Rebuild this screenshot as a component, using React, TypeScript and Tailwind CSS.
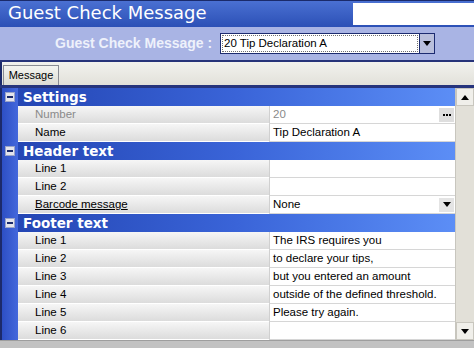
import React from 'react';

type Row =
  | { kind: 'section'; title: string }
  | { kind: 'prop'; label: string; value?: string; muted?: boolean; underline?: boolean; button?: 'dots' | 'drop' };

const rows: Row[] = [
  { kind: 'section', title: 'Settings' },
  { kind: 'prop', label: 'Number', value: '20', muted: true, button: 'dots' },
  { kind: 'prop', label: 'Name', value: 'Tip Declaration A' },
  { kind: 'section', title: 'Header text' },
  { kind: 'prop', label: 'Line 1' },
  { kind: 'prop', label: 'Line 2' },
  { kind: 'prop', label: 'Barcode message', value: 'None', underline: true, button: 'drop' },
  { kind: 'section', title: 'Footer text' },
  { kind: 'prop', label: 'Line 1', value: 'The IRS requires you' },
  { kind: 'prop', label: 'Line 2', value: 'to declare your tips,' },
  { kind: 'prop', label: 'Line 3', value: 'but you entered an amount' },
  { kind: 'prop', label: 'Line 4', value: 'outside of the defined threshold.' },
  { kind: 'prop', label: 'Line 5', value: 'Please try again.' },
  { kind: 'prop', label: 'Line 6' },
];

function DownArrow() {
  return (
    <svg width="8" height="5" viewBox="0 0 8 5">
      <path d="M0 0 H8 L4 5 Z" fill="#000" />
    </svg>
  );
}

function UpArrow() {
  return (
    <svg width="8" height="5" viewBox="0 0 8 5">
      <path d="M0 5 H8 L4 0 Z" fill="#000" />
    </svg>
  );
}

function Gutter({ minus }: { minus?: boolean }) {
  return (
    <div className="w-[16px] h-full shrink-0 bg-gradient-to-r from-[#2d4fc4] to-[#4468dc] flex items-center justify-center">
      {minus && (
        <div className="w-[10px] h-[10px] bg-[#e4e4ec] border border-[#9aa4c8] flex items-center justify-center">
          <div className="w-[6px] h-[2px] bg-[#1a2a6a]" />
        </div>
      )}
    </div>
  );
}

function GridRow({ row }: { row: Row }) {
  if (row.kind === 'section') {
    return (
      <div className="flex h-[18px]">
        <Gutter minus />
        <div className="flex-1 flex items-center pl-[5px] bg-gradient-to-r from-[#2446b4] via-[#3a64d8] to-[#5c8ef6] text-white font-bold text-[13.5px] font-['DejaVu_Sans',sans-serif]">
          {row.title}
        </div>
      </div>
    );
  }
  return (
    <div className="flex h-[18px]">
      <Gutter />
      <div className="w-[251px] shrink-0 flex items-center pl-[17px] bg-gradient-to-b from-[#f6f6f6] to-[#dcdcdc] border-b border-white">
        <span className={`${row.muted ? 'text-[#8a8a8a]' : 'text-black'} ${row.underline ? 'underline' : ''}`}>
          {row.label}
        </span>
      </div>
      <div className="flex-1 flex items-center pl-[3px] bg-white border-b border-[#d6d6d6] border-l border-l-[#d0d0d0]">
        <span className={row.muted ? 'text-[#8a8a8a]' : 'text-black'}>{row.value}</span>
        {row.button === 'dots' && (
          <div className="ml-auto mr-[1px] w-[15px] h-[14px] bg-[#dedede] flex items-center justify-center gap-[1px]">
            <div className="w-[2px] h-[2px] bg-black" />
            <div className="w-[2px] h-[2px] bg-black" />
            <div className="w-[2px] h-[2px] bg-black" />
          </div>
        )}
        {row.button === 'drop' && (
          <div className="ml-auto mr-[1px] w-[15px] h-[14px] bg-[#e4e4e4] flex items-center justify-center">
            <DownArrow />
          </div>
        )}
      </div>
    </div>
  );
}

export default function App() {
  return (
    <div className="w-[474px] h-[348px] overflow-hidden flex flex-col font-['Liberation_Sans',Arial,sans-serif] text-[11.5px] bg-[#c4c4c4]">
      {/* title bar */}
      <div className="h-[27px] shrink-0 flex bg-gradient-to-b from-[#4a70d2] to-[#2c50b6] border-t border-[#1a2a6a]">
        <div className="pl-[8px] text-white text-[18px] leading-[24px] font-['DejaVu_Sans',sans-serif]">
          Guest Check Message
        </div>
        <div className="ml-auto mt-[2px] w-[121px] h-[22px] bg-white" />
      </div>

      {/* selector */}
      <div className="h-[33px] shrink-0 flex items-center bg-[#a9b4e4]">
        <span className="pl-[55px] w-[220px] shrink-0 text-[#eef1fb] font-bold text-[14px]">Guest Check Message :</span>
        <div className="flex h-[21px] border border-[#1c2b70] bg-white">
          <div className="w-[196px] m-[1px] border border-dotted border-[#707070] flex items-center pl-[1px] text-black">
            20 Tip Declaration A
          </div>
          <div className="w-[15px] bg-[#b9bfdc] border-l border-[#1c2b70] flex items-center justify-center">
            <DownArrow />
          </div>
        </div>
      </div>
      <div className="h-[2px] shrink-0 bg-[#27347a]" />

      {/* tab strip */}
      <div className="h-[23px] shrink-0 flex items-end bg-gradient-to-b from-[#f2f2ee] to-[#e2e1da] border-l-2 border-[#1c2a6a]">
        <div className="ml-[1px] h-[20px] w-[56px] flex items-center justify-center bg-gradient-to-b from-[#f4f4f0] to-[#dcdcd4] border border-b-0 border-[#8a8c94] text-[11px] text-black">
          Message
        </div>
      </div>
      <div className="h-[3px] shrink-0 bg-[#26347c]" />

      {/* property grid */}
      <div className="h-[252px] shrink-0 flex">
        <div className="w-[2px] shrink-0 bg-[#1c2a6a]" />
        <div className="flex-1 flex flex-col">
          {rows.map((r, i) => (
            <GridRow key={i} row={r} />
          ))}
        </div>
        <div className="w-[19px] shrink-0 flex flex-col bg-[#e2e0d8] border-l border-[#c8c6be]">
          <div className="h-[18px] bg-[#f0efea] border border-[#c8c6be] flex items-center justify-center">
            <UpArrow />
          </div>
          <div className="flex-1" />
          <div className="h-[18px] bg-[#f0efea] border border-[#c8c6be] flex items-center justify-center">
            <DownArrow />
          </div>
        </div>
      </div>

      <div className="flex-1 bg-[#c2c2c2] border-t border-[#9e9e9e]" />
    </div>
  );
}
